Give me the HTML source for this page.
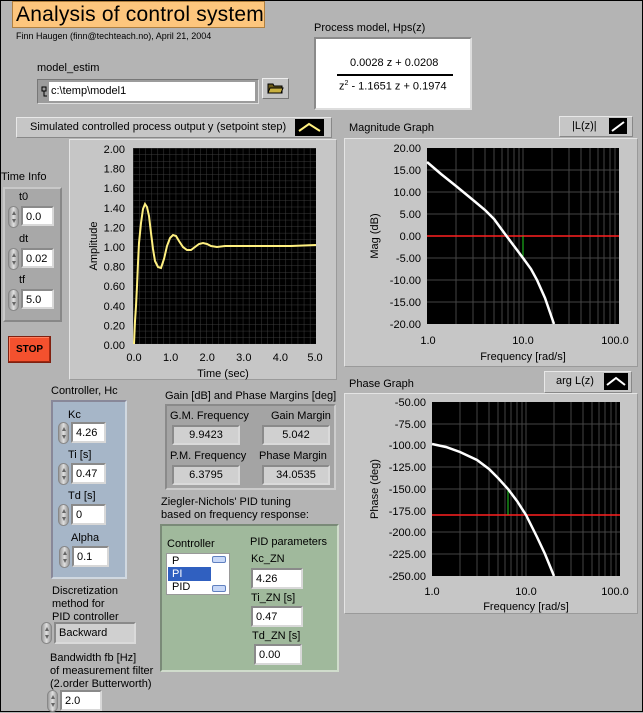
<!DOCTYPE html>
<html><head><meta charset="utf-8"><style>
*{box-sizing:border-box;margin:0;padding:0}
body{width:643px;height:712px;background:#b4b4b4;font-family:"Liberation Sans",sans-serif;font-size:11px;color:#000;position:relative;overflow:hidden;border:1px solid #000}
.a{position:absolute;white-space:nowrap}
.frame{position:absolute;background:#c6c6c6;border:1px solid #9a9a9a;border-top-color:#e4e4e4;border-left-color:#e4e4e4}
.num{position:absolute;background:#fff;border:2px solid #8a8a8a;border-right-color:#d8d8d8;border-bottom-color:#d8d8d8;padding:2px 3px;font-size:11px;line-height:14px}
.ind{position:absolute;background:#d0d0d0;border:2px solid #8a8a8a;border-right-color:#dadada;border-bottom-color:#dadada;text-align:center;font-size:11px;line-height:16px}
.spin{position:absolute;width:11px;height:22px;border-radius:6px;background:linear-gradient(90deg,#9a9a9a,#e0e0e0,#9a9a9a);border:1px solid #888}
.spin:before{content:"";position:absolute;left:3px;top:4px;border:2px solid transparent;border-bottom:4px solid #666;border-top:0}
.spin:after{content:"";position:absolute;left:3px;bottom:4px;border:2px solid transparent;border-top:4px solid #666;border-bottom:0}
</style></head><body>

<div class="a" style="left:11px;top:0;width:253px;height:27px;background:#fdc67d;border:1px solid #b08040;font-size:21px;line-height:26px;padding-left:3px;letter-spacing:0.2px">Analysis of control system</div>
<div class="a" style="left:15px;top:30px;font-size:9px">Finn Haugen (finn@techteach.no), April 21, 2004</div>

<div class="a" style="left:313px;top:21px">Process model, Hps(z)</div>
<div class="a" style="left:313px;top:36px;width:158px;height:73px;background:#fff;border:2px solid #8a8a8a;border-right-color:#ddd;border-bottom-color:#ddd"></div>
<div class="a" style="left:349px;top:56px;font-size:11px">0.0028 z + 0.0208</div>
<div class="a" style="left:336px;top:73px;width:116px;height:2px;background:#000"></div>
<div class="a" style="left:338px;top:79px;font-size:11px">z<sup style="font-size:7px">2</sup> - 1.1651 z + 0.1974</div>

<div class="a" style="left:36px;top:61px">model_estim</div>
<div class="a" style="left:36px;top:78px;width:222px;height:25px;background:#9c9c9c;border:1px solid #777;border-right-color:#ddd;border-bottom-color:#ddd"></div>
<div class="a" style="left:48px;top:81px;width:206px;height:19px;background:#fff;line-height:19px;padding-left:2px">c:\temp\model1</div>
<svg class="a" style="left:40px;top:85px" width="7" height="11"><path d="M1 1h4v4H1zM3 5v5h3" stroke="#000" fill="none"/></svg>
<div class="a" style="left:261px;top:77px;width:27px;height:21px;background:#c4c4c4;border:1px solid #eee;border-right-color:#777;border-bottom-color:#777"></div>
<svg class="a" style="left:266px;top:81px" width="17" height="12"><path d="M1 2h5l1 2h8v7H1z" fill="#6a5a1a" stroke="#000" stroke-width="1"/><path d="M3 6h13l-2 5H1z" fill="#c8b040" stroke="#000"/></svg>

<div class="a" style="left:15px;top:116px;width:316px;height:21px;background:#c6c6c6;border:1px solid #e8e8e8;border-right-color:#888;border-bottom-color:#888;line-height:18px;padding-left:13px">Simulated controlled process output y (setpoint step)</div>
<div class="a" style="left:294px;top:118px;width:29px;height:17px;background:#000"></div>
<svg class="a" style="left:296px;top:120px" width="25" height="13"><path d="M2 10L12 3L23 10" stroke="#fff080" stroke-width="2" fill="none"/></svg>

<div class="frame" style="left:68px;top:138px;width:268px;height:241px"></div>
<div class="a" style="left:0;top:170px">Time Info</div>
<div class="a" style="left:2px;top:186px;width:59px;height:135px;background:#a8a8a8;border:2px solid #c8c8c8;border-right-color:#888;border-bottom-color:#888"></div>
<div class="a" style="left:18px;top:190px">t0</div><div class="spin" style="left:7px;top:205px"></div><div class="num" style="left:20px;top:205px;width:33px;height:20px">0.0</div>
<div class="a" style="left:18px;top:232px">dt</div><div class="spin" style="left:7px;top:247px"></div><div class="num" style="left:20px;top:247px;width:33px;height:20px">0.02</div>
<div class="a" style="left:18px;top:273px">tf</div><div class="spin" style="left:7px;top:288px"></div><div class="num" style="left:20px;top:288px;width:33px;height:20px">5.0</div>
<div class="a" style="left:7px;top:335px;width:43px;height:27px;background:#f4512e;border:1px solid #802010;box-shadow:inset -1px -1px 0 #a02810,inset 1px 1px 0 #ff8060;font-weight:bold;font-size:10px;line-height:25px;text-align:center">STOP</div>

<div class="a" style="left:348px;top:121px">Magnitude Graph</div>
<div class="a" style="left:558px;top:115px;width:74px;height:21px;background:#c6c6c6;border:1px solid #e8e8e8;border-right-color:#888;border-bottom-color:#888;line-height:18px;padding-left:12px">|L(z)|</div>
<div class="a" style="left:608px;top:117px;width:18px;height:16px;background:#000"></div>
<svg class="a" style="left:609px;top:118px" width="16" height="14"><path d="M2 12L14 3" stroke="#fff" stroke-width="2"/></svg>
<div class="frame" style="left:343px;top:137px;width:294px;height:229px"></div>

<div class="a" style="left:348px;top:377px">Phase Graph</div>
<div class="a" style="left:543px;top:370px;width:88px;height:22px;background:#c6c6c6;border:1px solid #e8e8e8;border-right-color:#888;border-bottom-color:#888;line-height:18px;padding-left:11px">arg L(z)</div>
<div class="a" style="left:603px;top:372px;width:24px;height:17px;background:#000"></div>
<svg class="a" style="left:604px;top:373px" width="22" height="15"><path d="M2 11L11 4L20 11" stroke="#fff" stroke-width="2" fill="none"/></svg>
<div class="frame" style="left:343px;top:392px;width:294px;height:221px"></div>

<svg class="a" style="left:0;top:0" width="643" height="712" font-family="Liberation Sans, sans-serif" font-size="11">
<defs>
<pattern id="g1" x="132" y="147" width="6.1" height="6.53" patternUnits="userSpaceOnUse"><path d="M0 0V6.53M0 0H6.1" stroke="#3c3c3c" stroke-width="1"/></pattern>
</defs>
<rect x="132" y="147" width="183" height="196" fill="#000"/>
<rect x="132" y="147" width="183" height="196" fill="url(#g1)"/>
<polyline fill="none" stroke="#fff080" stroke-width="2" points="133,343 134,320 135,305 136,285 137,262 138,242 140,222 142,208 144,203 146,206 148,215 150,232 152,248 154,260 157,266 160,267 163,258 166,245 169,237 172,234 175,235 178,240 182,246 186,249 190,249 194,246 198,243 202,242 206,243 210,245 216,246 224,245 232,245 250,245 270,245 290,245 315,244"/>
<g text-anchor="end">
<text x="124" y="152">2.00</text><text x="124" y="171.6">1.80</text><text x="124" y="191.2">1.60</text><text x="124" y="210.8">1.40</text><text x="124" y="230.4">1.20</text><text x="124" y="250">1.00</text><text x="124" y="269.6">0.80</text><text x="124" y="289.2">0.60</text><text x="124" y="308.8">0.40</text><text x="124" y="328.4">0.20</text><text x="124" y="348">0.00</text>
</g>
<g text-anchor="middle">
<text x="133" y="360">0.0</text><text x="169.6" y="360">1.0</text><text x="206.2" y="360">2.0</text><text x="242.8" y="360">3.0</text><text x="279.4" y="360">4.0</text><text x="314" y="360">5.0</text>
<text x="222" y="376">Time (sec)</text>
<text transform="translate(96,245) rotate(-90)">Amplitude</text>
</g>

<rect x="426" y="147" width="192" height="176" fill="#000"/>
<g stroke="#444" stroke-width="1">
<path d="M455 147V323M472 147V323M484 147V323M493 147V323M501 147V323M507 147V323M513 147V323M518 147V323M522 147V323M551 147V323M568 147V323M580 147V323M589 147V323M597 147V323M603 147V323M609 147V323M614 147V323"/>
<path d="M426 169H618M426 191H618M426 213H618M426 257H618M426 279H618M426 301H618"/>
</g>
<path d="M426 235H618" stroke="#ff2020" stroke-width="1.5"/>
<path d="M522 235V257" stroke="#20d020" stroke-width="1"/>
<polyline fill="none" stroke="#fff" stroke-width="2.5" points="426,161 440,173 455,185 472,199 484,209 493,218 504,233 513,245 522,257 530,268 536,279 544,297 553,323"/>
<g text-anchor="end">
<text x="420" y="151">20.00</text><text x="420" y="173">15.00</text><text x="420" y="195">10.00</text><text x="420" y="217">5.00</text><text x="420" y="239">0.00</text><text x="420" y="261">-5.00</text><text x="420" y="283">-10.00</text><text x="420" y="305">-15.00</text><text x="420" y="327">-20.00</text>
</g>
<g text-anchor="middle">
<text x="427" y="343">1.0</text><text x="522" y="343">10.0</text><text x="614" y="343">100.0</text>
<text x="522" y="359">Frequency [rad/s]</text>
<text transform="translate(377,235) rotate(-90)">Mag (dB)</text>
</g>

<rect x="431" y="401" width="188" height="174" fill="#000"/>
<g stroke="#444" stroke-width="1">
<path d="M459 401V575M476 401V575M488 401V575M497 401V575M504 401V575M510 401V575M516 401V575M521 401V575M525 401V575M553 401V575M570 401V575M582 401V575M591 401V575M598 401V575M604 401V575M610 401V575M615 401V575"/>
<path d="M431 423H619M431 444H619M431 466H619M431 488H619M431 531H619M431 553H619"/>
</g>
<path d="M431 514H619" stroke="#ff2020" stroke-width="1.5"/>
<path d="M507 488V514" stroke="#20d020" stroke-width="1"/>
<polyline fill="none" stroke="#fff" stroke-width="2.5" points="431,443 445,446 459,451 476,459 488,468 497,477 507,488 516,500 525,514 536,536 544,553 553,575"/>
<g text-anchor="end">
<text x="425" y="405">-50.00</text><text x="425" y="427">-75.00</text><text x="425" y="448">-100.00</text><text x="425" y="470">-125.00</text><text x="425" y="492">-150.00</text><text x="425" y="514">-175.00</text><text x="425" y="535">-200.00</text><text x="425" y="557">-225.00</text><text x="425" y="579">-250.00</text>
</g>
<g text-anchor="middle">
<text x="431" y="594">1.0</text><text x="525" y="594">10.0</text><text x="614" y="594">100.0</text>
<text x="525" y="609">Frequency [rad/s]</text>
<text transform="translate(377,488) rotate(-90)">Phase (deg)</text>
</g>
</svg>

<div class="a" style="left:50px;top:384px">Controller, Hc</div>
<div class="a" style="left:50px;top:399px;width:76px;height:179px;background:#a6b6c8;border:2px solid #889;border-right-color:#d0d8e0;border-bottom-color:#d0d8e0"></div>
<div class="a" style="left:67px;top:408px">Kc</div><div class="spin" style="left:57px;top:421px"></div><div class="num" style="left:70px;top:421px;width:35px;height:21px">4.26</div>
<div class="a" style="left:67px;top:448px">Ti [s]</div><div class="spin" style="left:57px;top:462px"></div><div class="num" style="left:70px;top:462px;width:35px;height:21px">0.47</div>
<div class="a" style="left:67px;top:489px">Td [s]</div><div class="spin" style="left:57px;top:503px"></div><div class="num" style="left:70px;top:503px;width:35px;height:21px">0</div>
<div class="a" style="left:70px;top:531px">Alpha</div><div class="spin" style="left:58px;top:545px"></div><div class="num" style="left:71px;top:545px;width:37px;height:21px">0.1</div>

<div class="a" style="left:51px;top:584px;line-height:13px">Discretization<br>method for<br>PID controller</div>
<div class="spin" style="left:40px;top:621px"></div>
<div class="ind" style="left:53px;top:621px;width:82px;height:22px;text-align:left;padding-left:3px;line-height:18px">Backward</div>
<div class="a" style="left:49px;top:651px;line-height:13px">Bandwidth fb [Hz]<br>of measurement filter<br>(2.order Butterworth)</div>
<div class="spin" style="left:46px;top:689px"></div>
<div class="num" style="left:59px;top:689px;width:42px;height:21px">2.0</div>

<div class="a" style="left:164px;top:389px">Gain [dB] and Phase Margins [deg]</div>
<div class="a" style="left:164px;top:403px;width:171px;height:86px;background:#a4a4a4;border:2px solid #8a8a8a;border-right-color:#ccc;border-bottom-color:#ccc"></div>
<div class="a" style="left:169px;top:409px">G.M. Frequency</div>
<div class="a" style="left:270px;top:409px">Gain Margin</div>
<div class="ind" style="left:171px;top:424px;width:68px;height:20px">9.9423</div>
<div class="ind" style="left:261px;top:424px;width:68px;height:20px">5.042</div>
<div class="a" style="left:169px;top:449px">P.M. Frequency</div>
<div class="a" style="left:258px;top:449px">Phase Margin</div>
<div class="ind" style="left:171px;top:464px;width:68px;height:20px">6.3795</div>
<div class="ind" style="left:261px;top:464px;width:68px;height:20px">34.0535</div>

<div class="a" style="left:160px;top:495px;line-height:13px">Ziegler-Nichols' PID tuning<br>based on frequency response:</div>
<div class="a" style="left:159px;top:523px;width:179px;height:148px;background:#a0b99c;border:2px solid #7a8a78;border-right-color:#d0dccc;border-bottom-color:#d0dccc"></div>
<div class="a" style="left:166px;top:537px">Controller</div>
<div class="a" style="left:165px;top:552px;width:64px;height:42px;background:#fff;border:1px solid #999"></div>
<div class="a" style="left:167px;top:554px;width:43px;height:12px;line-height:12px;padding-left:4px">P</div>
<div class="a" style="left:167px;top:566px;width:43px;height:14px;background:#3060c0;color:#fff;line-height:14px;padding-left:4px">PI</div>
<div class="a" style="left:167px;top:580px;width:43px;height:13px;line-height:13px;padding-left:4px">PID</div>
<div class="a" style="left:211px;top:555px;width:14px;height:7px;background:#c8d8f8;border:1px solid #6080c0;border-radius:2px"></div>
<div class="a" style="left:211px;top:584px;width:14px;height:7px;background:#c8d8f8;border:1px solid #6080c0;border-radius:2px"></div>
<div class="a" style="left:249px;top:535px">PID parameters</div>
<div class="a" style="left:250px;top:552px">Kc_ZN</div>
<div class="num" style="left:250px;top:567px;width:52px;height:21px">4.26</div>
<div class="a" style="left:250px;top:591px">Ti_ZN [s]</div>
<div class="num" style="left:250px;top:605px;width:52px;height:21px">0.47</div>
<div class="a" style="left:251px;top:629px">Td_ZN [s]</div>
<div class="num" style="left:253px;top:643px;width:48px;height:21px">0.00</div>
</body></html>
